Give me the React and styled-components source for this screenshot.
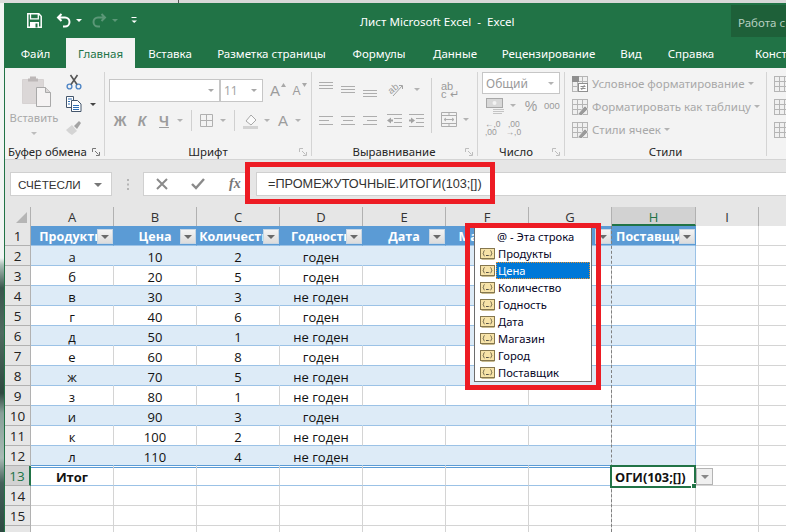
import React from 'react';
import styled, { createGlobalStyle } from 'styled-components';

const Global = createGlobalStyle`
  html, body { margin: 0; padding: 0; background: #fff; }
  * { box-sizing: border-box; }
`;
const UI = `"Noto Sans", "Open Sans", sans-serif`;
const CELL = `"Open Sans", "Noto Sans", sans-serif`;
const GREEN = '#217346';
const GRAY = '#a8a8a8';

const Page = styled.div`
  position: relative; width: 786px; height: 532px; overflow: hidden;
  display: flex; flex-direction: column; font-family: ${UI}; background: #fff;
`;
const TopStrip = styled.div`height: 3px; background: linear-gradient(90deg, #dcdcdc 0 178px, #555 178px 179px, #d8d8d8 179px); flex: none;`;
const Body = styled.div`flex: 1; display: flex; min-height: 0;`;
const Desktop = styled.div`
  width: 5px; flex: none; border-right: 1px solid ${GREEN};
  background: linear-gradient(180deg, #f2f5f4 0 255px, #a9bdb6 262px, #3a564d 285px, #4f6b60 330px, #2f4a40 390px, #88a099 410px, #a8bab4 455px, #44605a 480px, #2e4a42 529px);
`;
const Win = styled.div`flex: 1; display: flex; flex-direction: column; min-width: 0;`;

const TitleBar = styled.div`height: 34px; flex: none; background: ${GREEN}; display: flex; align-items: center; position: relative; padding-left: 22px;`;
const Qat = styled.div`display: flex; align-items: center; height: 100%;`;
const Title = styled.div`position: absolute; left: 355px; top: 0; line-height: 37px; color: #fff; font-size: 11.6px; white-space: pre;`;
const Context = styled.div`position: absolute; right: 0; top: 2px; bottom: -31px; width: 55px; background: #1e6039; color: #b6cfc0; font-size: 11.5px; line-height: 36px; padding-left: 7px; white-space: nowrap; overflow: hidden;`;

const TabRow = styled.div`height: 31px; flex: none; background: ${GREEN}; display: flex; align-items: flex-end; position: relative;`;
const Tab = styled.div`
  width: ${p => p.$w}px; height: 30px; text-align: center; line-height: 31px; font-size: 11.5px; white-space: nowrap; overflow: hidden;
  color: ${p => p.$on ? GREEN : '#fff'}; background: ${p => p.$on ? '#f3f3f3' : 'transparent'};
`;
const CtxTab = styled(Tab)`position: relative; text-align: left; padding-left: 13px; width: 44px; z-index: 1;`;

const Ribbon = styled.div`height: 92px; flex: none; background: #f3f3f3; border-bottom: 1px solid #d4d4d4; display: flex; padding-top: 4px; overflow: hidden;`;
const Group = styled.div`
  width: ${p => p.$w}px; flex: none; height: 84px; border-right: ${p => p.$last ? '0' : '1px solid #d4d4d4'}; position: relative;
  display: flex; flex-direction: column; padding-left: ${p => p.$pl || 0}px;
`;
const GroupBody = styled.div`flex: 1; display: flex; flex-direction: ${p => p.$col ? 'column' : 'row'}; min-height: 0;`;
const GroupLabel = styled.div`height: 17px; flex: none; text-align: center; font-size: 11.4px; line-height: 16px; margin-bottom: -5px; color: #262626; white-space: nowrap; padding-right: ${p => p.$pr || 0}px; margin-left: ${p => p.$ml || 0}px;`;
const LauncherBox = styled.span`position: absolute; right: 4px; bottom: 0; width: 8px; height: 8px; display: flex;`;
const Launcher = ({ dim }) => (
  <LauncherBox><svg width="8" height="8" viewBox="0 0 8 8" fill="none" stroke={dim ? '#bdbdbd' : '#777'}><path d="M.5 4V.5H4M3 3l3.5 3.5M4 7.5h3.5V4" /></svg></LauncherBox>
);

const PasteCol = styled.div`width: 52px; margin-left: 3px; display: flex; flex-direction: column; align-items: center; padding-top: 3px; color: ${GRAY}; font-size: 11.2px; line-height: 16px;`;
const PasteLabel = styled.div`margin-top: 2px; margin-bottom: 6px;`;
const ToolCol = styled.div`display: flex; flex-direction: column; gap: ${p => p.$gap ?? 8}px; margin-left: 6px; padding-top: 2px;`;
const IconRow = styled.div`display: flex; align-items: center; flex: none; gap: ${p => p.$gap ?? 0}px; margin-top: ${p => p.$mt || 0}px; margin-left: ${p => p.$ml || 0}px; height: ${p => p.$h ? p.$h + 'px' : 'auto'};`;
const Caret = styled.span`
  width: 0; height: 0; flex: none; border-left: 3px solid transparent; border-right: 3px solid transparent;
  border-top: 3px solid ${p => p.$c || '#b3b3b3'}; margin: ${p => p.$m || '0'};
`;
const Combo = styled.div`
  width: ${p => p.$w}px; height: 23px; background: #fff; border: 1px solid #c6c6c6; margin-left: ${p => p.$ml || 0}px;
  display: flex; align-items: center; justify-content: space-between; padding: 0 5px 0 3px; font-size: 12px; color: #a5a5a5; flex: none; font-family: ${UI};
`;
const NumCombo = styled(Combo)`font-size: 12px; color: #9a9a9a; height: 22px;`;
const Sep = styled.span`width: 1px; height: ${p => p.$h || 21}px; background: #d0d0d0; flex: none; margin: ${p => p.$m || '0'};`;
const FontLetter = styled.span`font-family: "Liberation Sans", sans-serif; color: #9c9c9c; font-weight: ${p => p.$b ? 700 : 400}; font-style: ${p => p.$i ? 'italic' : 'normal'}; font-size: ${p => p.$s || 14}px; text-decoration: ${p => p.$u ? 'underline' : 'none'}; width: ${p => p.$w}px; text-align: center; line-height: 18px; flex: none; margin-left: ${p => p.$ml || 0}px;`;
const Small = styled.span`font-size: ${p => p.$s || 10}px; color: #9a9a9a; line-height: ${p => p.$lh || 8}px; font-family: "Liberation Sans", sans-serif; margin-left: ${p => p.$ml || 0}px; display: inline-block; white-space: pre;`;
const AlignGrid = styled.div`display: flex; flex-direction: column; gap: 0;`;
const StyleList = styled.div`display: flex; flex-direction: column; flex: 1;`;
const StyleRow = styled.div`display: flex; align-items: center; flex: none; height: 23px; color: ${GRAY}; font-size: 11.5px; white-space: nowrap; gap: 4px;`;

const FormulaBar = styled.div`height: 47px; flex: none; background: #e6e6e6; display: flex; padding: 12px 0 0 5px; align-items: flex-start;`;
const NameBox = styled.div`width: 102px; height: 24px; background: #fff; border: 1px solid #d0d0d0; display: flex; align-items: center; justify-content: space-between; padding: 1px 9px 0 7px; font-family: "Liberation Sans", sans-serif; font-size: 11.7px; color: #333;`;
const Grip = styled.div`width: 31px; height: 24px; display: flex; align-items: center; justify-content: center;`;
const FnBox = styled.div`width: 103px; height: 24px; background: #fff; border: 1px solid #d0d0d0; border-right: 0; display: flex; align-items: center; padding-left: 12px; gap: 22px;`;
const Fx = styled.span`font-family: "Liberation Serif", serif; font-style: italic; font-weight: 700; font-size: 14px; color: #777; margin-left: 2px;`;
const FormulaInput = styled.div`flex: 1; margin-left: 10px; height: 24px; background: #fff; border: 1px solid #d0d0d0; border-right: 0; font-family: "Liberation Sans", sans-serif; font-size: 12.7px; line-height: 23px; color: #333; padding-left: 11px;`;

const Sheet = styled.div`flex: 1; position: relative; overflow: hidden; background: #fff; min-height: 0;`;
const Grid = styled.div`
  display: grid; grid-template-columns: 26px repeat(7, 83px) 84px 63px 63px;
  grid-template-rows: 19px repeat(16, 20px); font-family: ${CELL}; font-size: 13px; color: #111;
`;
const Corner = styled.div`background: #e6e6e6; border-right: 1px solid #b1b1b1; display: flex; align-items: flex-end; justify-content: flex-end; padding: 0 3px 3px 0;`;
const ColHead = styled.div`
  background: ${p => p.$on ? '#d2d2d2' : '#e6e6e6'}; text-align: center; line-height: 21px; font-size: 13px;
  color: ${p => p.$on ? GREEN : '#333'}; border-right: 1px solid #b1b1b1; border-bottom: ${p => p.$on ? `2px solid ${GREEN}` : '0'};
`;
const RowHead = styled.div`
  background: ${p => p.$on ? '#d2d2d2' : '#e6e6e6'}; text-align: center; line-height: 21px; font-size: 13.5px;
  color: ${p => p.$on ? GREEN : '#222'}; border-bottom: 1px solid #b1b1b1; border-right: ${p => p.$on ? `2px solid ${GREEN}` : '1px solid #b1b1b1'};
`;
const tones = {
  head: 'background:#5b9bd5;color:#fff;font-weight:700;font-size:12.5px;border-right:1px solid #5b9bd5;border-bottom:1px solid #9bc2e6;',
  band: 'background:#ddebf7;border-right:1px solid #ddebf7;border-bottom:1px solid #9bc2e6;',
  plain: 'background:#fff;border-right:1px solid #d4d4d4;border-bottom:1px solid #9bc2e6;',
  bandLast: 'background:#ddebf7;border-right:1px solid #ddebf7;border-bottom:1px solid #5b9bd5;',
  total: 'background:#fff;border-right:1px solid #d4d4d4;border-bottom:1px solid #9bc2e6;font-weight:700;box-shadow:inset 0 1px 0 #fff,inset 0 2px 0 #5b9bd5;',
  empty: 'background:#fff;border-right:1px solid #d4d4d4;border-bottom:1px solid #d4d4d4;',
};
const Cell = styled.div`
  ${p => tones[p.$tone]} position: relative; text-align: center; line-height: 22px; white-space: nowrap; overflow: hidden;
  ${p => p.$edge ? 'border-right-color:#9bc2e6;' : ''}
`;
const Filter = styled.span`
  position: absolute; right: 0; top: 3px; width: 16px; height: 15px; background: linear-gradient(#f4f4f4, #dcdcdc);
  border: 1px solid #f2f2f2; outline: 1px solid #c9d6e2; outline-offset: -1px; display: flex; align-items: center; justify-content: center;
`;
const Active = styled.div`
  position: absolute; left: 605px; top: 258px; width: 86px; height: 23px; border: 2px solid ${GREEN}; background: #fff;
  font-family: ${CELL}; font-weight: 700; font-size: 12.8px; line-height: 20px; padding-left: 3px; color: #111; white-space: nowrap; z-index: 3;
`;
const Handle = styled.span`position: absolute; right: -2px; bottom: -2px; width: 5px; height: 5px; background: ${GREEN}; border-left: 1px solid #fff; border-top: 1px solid #fff;`;
const Drop = styled.div`
  position: absolute; left: 691px; top: 261px; width: 17px; height: 17px; background: #f0f0f0; border: 1px solid #b4b4b4;
  display: flex; align-items: center; justify-content: center; z-index: 3;
`;
const Dash = styled.div`position: absolute; left: 606px; top: 19px; bottom: 0; border-left: 1px dashed #808080; z-index: 2;`;
const Popup = styled.div`
  position: absolute; left: 469px; top: 20px; width: 118px; height: 155px; background: #fff; border: 1px solid #6d6d6d; border-top: 0;
  z-index: 4; font-family: ${UI}; font-size: 11.2px; color: #05051f; padding-top: 1px;
`;
const PopItem = styled.div`display: flex; align-items: center; height: 17px; padding-left: 5px; gap: 1px; white-space: nowrap;`;
const PopText = styled.span`
  flex: 1; height: 17px; line-height: 15px; padding-left: 1px; margin-right: 1px; border: 1px dotted transparent;
  ${p => p.$sel ? 'background:#0078d7;color:#fff;border-color:#e8912d;' : ''}
  ${p => p.$plain ? 'margin-left: 15px;' : ''}
`;
const RedFrame = styled.div`
  position: absolute; left: ${p => p.$x}px; top: ${p => p.$y}px; width: ${p => p.$w}px; height: ${p => p.$h}px;
  border: 5px solid #ed1c24; z-index: 5; pointer-events: none;
`;

const S = ({ w, h, vb, children, stroke = GRAY, fill = 'none', sw = 1, style }) => (
  <svg width={w} height={h} viewBox={vb || `0 0 ${w} ${h}`} fill={fill} stroke={stroke} strokeWidth={sw} style={{ flex: 'none', ...style }}>{children}</svg>
);
const Lines = ({ rows }) => (
  <S w={15} h={16} stroke="#adadad">{rows.map(([x1, x2, y], i) => <path key={i} d={`M${x1} ${y + .5}H${x2}`} />)}</S>
);
const TableIcon = ({ accent }) => (
  <S w={16} h={16} stroke="#b5b5b5">
    <rect x=".5" y=".5" width="15" height="15" fill="#f0f0f0" />
    <path d="M.5 5.5h15M.5 10.5h15M5.5 .5v15M10.5 .5v15" />
    {accent}
  </S>
);
const CondAccent = (
  <>
    <rect x="0" y="0" width="7" height="6" fill="#8f8f8f" stroke="none" />
    <rect x="6.5" y="7.5" width="9" height="8" fill="#fff" stroke="#8f8f8f" />
    <path d="M8.5 10.5h5M8.5 12.5h5M12.5 9l-3 5" stroke="#8f8f8f" />
  </>
);
const BrushAccent = <path d="M6 15l5-6 2-2 3 3-2 2-5 5z" fill="#9a9a9a" stroke="#f3f3f3" strokeWidth=".6" />;
const RotText = styled.text`font-family: "Liberation Sans", sans-serif; font-size: 9.5px; fill: #9a9a9a; stroke: none;`;

const tabs = [['Файл', 61], ['Главная', 69, true], ['Вставка', 70], ['Разметка страницы', 133], ['Формулы', 82], ['Данные', 70], ['Рецензирование', 117], ['Вид', 48], ['Справка', 72]];
const cols = ['A', 'B', 'C', 'D', 'E', 'F', 'G', 'H', 'I', ''];
const heads = ['Продукты', 'Цена', 'Количество', 'Годность', 'Дата', 'Магазин', 'Город', 'Поставщик'];
const data = [
  ['а', '10', '2', 'годен'], ['б', '20', '5', 'годен'], ['в', '30', '3', 'не годен'], ['г', '40', '6', 'годен'],
  ['д', '50', '1', 'не годен'], ['е', '60', '8', 'годен'], ['ж', '70', '5', 'не годен'], ['з', '80', '1', 'не годен'],
  ['и', '90', '3', 'годен'], ['к', '100', '2', 'не годен'], ['л', '110', '4', 'не годен'],
];
const items = ['Продукты', 'Цена', 'Количество', 'Годность', 'Дата', 'Магазин', 'Город', 'Поставщик'];

const FieldIcon = () => (
  <svg width="15" height="12" viewBox="0 0 15 12" style={{ flex: 'none' }}>
    <rect x=".5" y=".5" width="14" height="10" fill="#f7e3a8" stroke="#85774f" />
    <path d="M1.5 11.5h13" stroke="#c9bb90" />
    <path d="M4.5 2.5c-1 0-.6 2.2-1.4 2.8C3.9 6 3.5 8 4.5 8M10.5 2.5c1 0 .6 2.2 1.4 2.8C11.1 6 11.5 8 10.5 8" stroke="#4d4632" fill="none" strokeWidth=".8" />
    <path d="M6 7.5h.8M7.2 7.5h.8M8.4 7.5h.8" stroke="#333" />
  </svg>
);
const Tri = ({ c = '#6a6a6a' }) => <Caret $c={c} style={{ borderLeftWidth: 4, borderRightWidth: 4, borderTopWidth: 4 }} />;

export default function App() {
  const cellRows = [];
  for (let r = 1; r <= 16; r++) {
    const row = [<RowHead key={`h${r}`} $on={r === 13}>{r}</RowHead>];
    for (let c = 0; c < 10; c++) {
      let tone = 'empty'; let text = ''; let filter = false;
      if (c < 8 && r <= 13) {
        if (r === 1) { tone = 'head'; text = heads[c]; filter = true; }
        else if (r === 13) { tone = 'total'; text = c === 0 ? 'Итог' : ''; }
        else {
          tone = r === 12 ? 'bandLast' : r % 2 === 0 ? 'band' : 'plain';
          text = data[r - 2][c] || '';
        }
      }
      row.push(
        <Cell key={`${r}-${c}`} $tone={tone} $edge={c === 7 && r <= 13 && r > 1}>
          {text}{filter && <Filter><Tri /></Filter>}
        </Cell>
      );
    }
    cellRows.push(row);
  }
  return (
    <Page>
      <Global />
      <TopStrip />
      <Body>
        <Desktop />
        <Win>
          <TitleBar>
            <Qat>
              <S w={15} h={15} stroke="#fff" sw={1.5}>
                <path d="M.8 .8h11l2.4 2.4v11H.8z" />
                <path d="M3.5 1v4.8h7.8V1" strokeWidth="1.3" />
                <path d="M3 9h9v5.5H3z" fill="#fff" stroke="none" />
                <path d="M8.5 10.5h2v4h-2z" fill={GREEN} stroke="none" />
              </S>
              <S w={15} h={15} stroke="#fff" sw={2} style={{ marginLeft: 14 }}>
                <path d="M5.5 1L2 4.5 5.5 8M2.5 4.5H9a4 4 0 0 1 0 9H7" />
              </S>
              <Caret $c="#fff" $m="0 0 0 5px" />
              <S w={15} h={15} stroke="#5b9777" sw={2} style={{ marginLeft: 10 }}>
                <path d="M9.5 1L13 4.5 9.5 8M12.5 4.5H6a4 4 0 0 0 0 9h2" />
              </S>
              <Caret $c="#5b9777" $m="0 0 0 5px" />
              <S w={7} h={8} stroke="#fff" style={{ marginLeft: 13 }}>
                <path d="M.5 1.5h5" /><path d="M.5 4.5h5.5L3.2 7z" fill="#fff" stroke="none" />
              </S>
            </Qat>
            <Title>Лист Microsoft Excel  -  Excel</Title>
            <Context>Работа с</Context>
          </TitleBar>
          <TabRow>
            {tabs.map(([t, w, on]) => <Tab key={t} $w={w} $on={on}>{t}</Tab>)}
            <Tab $w={15} />
            <CtxTab $w={44}>Конст</CtxTab>
          </TabRow>
          <Ribbon>
            <Group $w={100}>
              <GroupBody>
                <PasteCol>
                  <S w={30} h={33} stroke="#d6d2d2" fill="#dbd7d7" style={{ marginLeft: 6 }}>
                    <path d="M.5 4.5h21v24H.5z" />
                    <path d="M8 1.5h6v2h2v3H6v-3h2z" fill="#bdb8b8" stroke="none" />
                    <path d="M14.5 12.5h9l5 5v14h-14z" fill="#f5f3f3" stroke="#a9a9a9" />
                    <path d="M23.5 12.5v5h5" stroke="#a9a9a9" />
                  </S>
                  <PasteLabel>Вставить</PasteLabel>
                  <Caret $c="#bdbdbd" />
                </PasteCol>
                <ToolCol $gap={6}>
                  <S w={16} h={16} stroke="#4f86c6" sw={1.4}>
                    <circle cx="3.5" cy="12.5" r="2.4" /><circle cx="12.5" cy="12.5" r="2.4" />
                    <path d="M5 10.5L11.5 1M11 10.5L4.5 1" stroke="#555" strokeWidth="1.6" />
                  </S>
                  <IconRow>
                    <S w={16} h={16} stroke="#44566c">
                      <path d="M.5 .5h7v11h-7z" fill="#fff" /><path d="M5.5 4.5h6l3.5 3.5v7.5H5.5z" fill="#fff" /><path d="M2 3h4M2 5.5h2M2 8h2M7 9.5h6M7 11.5h6M7 13.5h6" stroke="#2f6fb5" />
                    </S>
                    <Caret $c="#444" $m="0 0 0 8px" />
                  </IconRow>
                  <S w={16} h={16} stroke="none" fill="#d4d4d4" style={{ marginTop: 2 }}>
                    <path d="M0 10l6-5 5 6-5 4-3-2z" />
                    <path d="M8 6l5-5 2 2-4 6z" fill="#a3a3a3" />
                  </S>
                </ToolCol>
              </GroupBody>
              <GroupLabel $pr={14}>Буфер обмена</GroupLabel>
              <Launcher />
            </Group>
            <Group $w={207} $pl={4}>
              <GroupBody $col>
                <IconRow $mt={7}>
                  <Combo $w={111}><span /><Caret $c="#a8a8a8" /></Combo>
                  <Combo $w={43}>11<Caret $c="#a8a8a8" /></Combo>
                  <FontLetter $s={15} $w={12} $ml={6}>A</FontLetter>
                  <S w={5} h={4} style={{ marginBottom: 11 }} stroke="none" fill="#a8a8a8"><path d="M0 4l2.5-4L5 4z" /></S>
                  <FontLetter $s={12} $w={11} $ml={5}>A</FontLetter>
                  <S w={5} h={4} style={{ marginBottom: 11 }} stroke="none" fill="#a8a8a8"><path d="M0 0l2.5 4L5 0z" /></S>
                </IconRow>
                <IconRow $mt={8} $ml={4}>
                  <FontLetter $b $w={14}>Ж</FontLetter>
                  <FontLetter $b $i $w={10} $ml={10}>К</FontLetter>
                  <FontLetter $b $u $w={10} $ml={12}>Ч</FontLetter>
                  <Caret $m="0 0 0 8px" />
                  <Sep $m="0 0 0 8px" />
                  <S w={13} h={13} style={{ marginLeft: 8 }} stroke="#b0b0b0"><path d="M.5 .5h12v12H.5zM.5 6.5h12M6.5 .5v12" /></S>
                  <Caret $m="0 0 0 7px" />
                  <Sep $m="0 0 0 8px" />
                  <S w={16} h={16} style={{ marginLeft: 8 }} stroke="#a8a8a8"><path d="M3 8l5-6 5 5-5 5z" fill="#fafafa" /><path d="M0 14.5h15" stroke="#d2d2d2" strokeWidth="3" /></S>
                  <Caret $m="0 0 0 5px" />
                  <FontLetter $s={15} $w={12} $ml={7}>A</FontLetter>
                  <Caret $m="0 0 0 6px" />
                </IconRow>
              </GroupBody>
              <GroupLabel $ml={-4}>Шрифт</GroupLabel>
              <Launcher dim />
            </Group>
            <Group $w={166} $pl={7}>
              <GroupBody>
                <AlignGrid>
                  <IconRow $mt={9} $gap={7}>
                    <Lines rows={[[0, 14, 1], [0, 14, 4], [0, 14, 7]]} />
                    <Lines rows={[[0, 14, 5], [0, 14, 8], [0, 14, 11]]} />
                    <Lines rows={[[0, 14, 9], [0, 14, 12], [0, 14, 15]]} />
                    <S w={18} h={16} style={{ marginLeft: 2 }} stroke="#a3a3a3">
                      <RotText x="1" y="11" transform="rotate(-40 6 8)">ab</RotText>
                      <path d="M6 15l9-10M12 4.5h3.5V8" />
                    </S>
                    <Caret $m="0 0 0 2px" />
                  </IconRow>
                  <IconRow $mt={17} $gap={7}>
                    <Lines rows={[[0, 14, 2], [0, 10, 6], [0, 14, 10]]} />
                    <Lines rows={[[0, 14, 2], [2, 12, 6], [0, 14, 10]]} />
                    <Lines rows={[[0, 14, 2], [4, 14, 6], [0, 14, 10]]} />
                    <S w={15} h={16} stroke="#adadad" style={{ marginLeft: 2 }}>
                      <path d="M0 .5h15M7 4.5h8M7 8.5h8M0 12.5h15" />
                      <path d="M0 6.5l4-3v2h2v2H4v2z" fill="#a3a3a3" stroke="none" />
                    </S>
                    <S w={15} h={16} stroke="#adadad">
                      <path d="M0 .5h15M7 4.5h8M7 8.5h8M0 12.5h15" />
                      <path d="M6 6.5l-4-3v2H0v2h2v2z" fill="#a3a3a3" stroke="none" />
                    </S>
                  </IconRow>
                </AlignGrid>
                <Sep $h={55} $m="6px 9px 0 7px" />
                <AlignGrid>
                  <IconRow $mt={10}><Small $s={11}>{'ab\nc ↵'}</Small></IconRow>
                  <IconRow $mt={14}>
                    <S w={16} h={15} stroke="#adadad"><path d="M.5 .5h15v14H.5zM.5 3.5h15M.5 11.5h15M8 .5v3M8 11.5v3M3 7.5h10M3 7.5l2-1.5M3 7.5l2 1.5M13 7.5l-2-1.5M13 7.5l-2 1.5" /></S>
                    <Caret $m="0 0 0 6px" />
                  </IconRow>
                </AlignGrid>
              </GroupBody>
              <GroupLabel $pr={8}>Выравнивание</GroupLabel>
              <Launcher dim />
            </Group>
            <Group $w={87} $pl={4}>
              <GroupBody $col>
                <NumCombo $w={78}>Общий<Caret /></NumCombo>
                <IconRow $mt={3} $ml={4} $h={17}>
                  <S w={20} h={16} stroke="#a8a8a8"><rect x=".5" y=".5" width="16" height="9" fill="#d8d8d8" /><circle cx="8.5" cy="5" r="2" fill="#f3f3f3" stroke="none" /><path d="M7 11.5h11M7 13.5h11M7 15.5h9" stroke="#c4c4c4" /></S>
                  <Caret $m="0 0 0 4px" />
                  <FontLetter $s={14} $w={14} $ml={8}>%</FontLetter>
                  <Small $s={9.5} $ml={6} $lh={10}>000</Small>
                </IconRow>
                <IconRow $mt={6} $ml={3} $gap={5}>
                  <Small $s={8.5}>{'←,0\n,00'}</Small>
                  <Small $s={8.5}>{' ,00\n→,0'}</Small>
                </IconRow>
              </GroupBody>
              <GroupLabel $pr={14}>Число</GroupLabel>
              <Launcher dim />
            </Group>
            <Group $w={202} $pl={7}>
              <GroupBody $col>
                <StyleList>
                  <StyleRow><TableIcon accent={CondAccent} />Условное форматирование<Caret $m="0 0 0 -1px" /></StyleRow>
                  <StyleRow><TableIcon accent={BrushAccent} />Форматировать как таблицу<Caret $m="0 0 0 -1px" /></StyleRow>
                  <StyleRow><TableIcon accent={BrushAccent} />Стили ячеек<Caret $m="0 0 0 -1px" /></StyleRow>
                </StyleList>
              </GroupBody>
              <GroupLabel $ml={-7}>Стили</GroupLabel>
            </Group>
            <Group $w={20} $pl={7} $last>
              <GroupBody $col>
                <IconRow $h={23}><TableIcon /></IconRow>
                <IconRow $h={23}><TableIcon /></IconRow>
                <IconRow $h={23}><TableIcon /></IconRow>
              </GroupBody>
            </Group>
          </Ribbon>
          <FormulaBar>
            <NameBox>СЧЁТЕСЛИ<Tri c="#777" /></NameBox>
            <Grip><S w={2} h={11} stroke="#b5b5b5" sw={2}><path d="M1 0v2M1 4.5v2M1 9v2" /></S></Grip>
            <FnBox>
              <S w={12} h={12} stroke="#8a8a8a" sw={2}><path d="M1 1l10 10M11 1L1 11" /></S>
              <S w={14} h={12} stroke="#8a8a8a" sw={2.4} style={{ marginLeft: 1 }}><path d="M1 6l4 4 8-9" /></S>
              <Fx>fx</Fx>
            </FnBox>
            <FormulaInput>=ПРОМЕЖУТОЧНЫЕ.ИТОГИ(103;[])</FormulaInput>
          </FormulaBar>
          <Sheet>
            <Grid>
              <Corner><svg width="11" height="11" viewBox="0 0 11 11"><path d="M11 0v11H0z" fill="#b5b5b5" /></svg></Corner>
              {cols.map((c, i) => <ColHead key={i} $on={c === 'H'}>{c}</ColHead>)}
              {cellRows}
            </Grid>
            <Dash />
            <Active>ОГИ(103;[])<Handle /></Active>
            <Drop><Tri c="#888" /></Drop>
            <Popup>
              <PopItem><PopText $plain>@ - Эта строка</PopText></PopItem>
              {items.map(t => (
                <PopItem key={t}><FieldIcon /><PopText $sel={t === 'Цена'}>{t}</PopText></PopItem>
              ))}
            </Popup>
          </Sheet>
        </Win>
      </Body>
      <RedFrame $x={245} $y={162} $w={250} $h={42} />
      <RedFrame $x={465} $y={223} $w={136} $h={167} />
    </Page>
  );
}
